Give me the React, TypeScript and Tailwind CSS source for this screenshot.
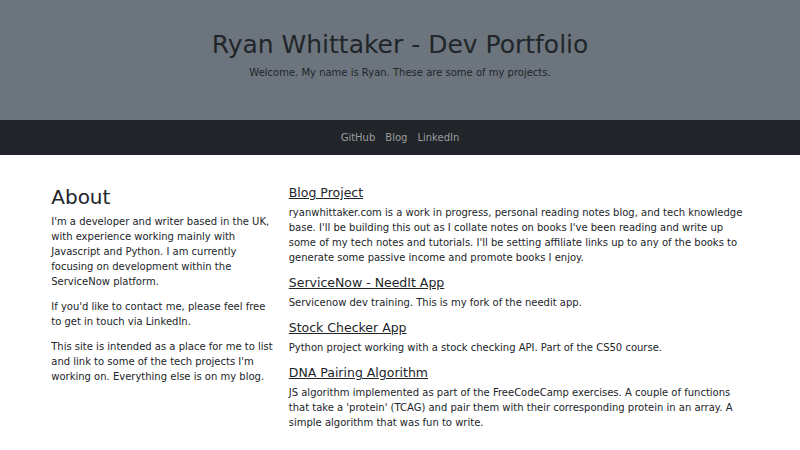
const projects = [
  {
    title: "Blog Project",
    text: "ryanwhittaker.com is a work in progress, personal reading notes blog, and tech knowledge base. I'll be building this out as I collate notes on books I've been reading and write up some of my tech notes and tutorials. I'll be setting affiliate links up to any of the books to generate some passive income and promote books I enjoy.",
  },
  {
    title: "ServiceNow - NeedIt App",
    text: "Servicenow dev training. This is my fork of the needit app.",
  },
  {
    title: "Stock Checker App",
    text: "Python project working with a stock checking API. Part of the CS50 course.",
  },
  {
    title: "DNA Pairing Algorithm",
    text: "JS algorithm implemented as part of the FreeCodeCamp exercises. A couple of functions that take a 'protein' (TCAG) and pair them with their corresponding protein in an array. A simple algorithm that was fun to write.",
  },
];

export default function App() {
  return (
    <div
      className="min-h-[450px] bg-white text-[#212529] text-[10px] leading-[15px]"
      style={{ fontFamily: '"DejaVu Sans", sans-serif' }}
    >
      {/* Header */}
      <header className="bg-[#6c757d] text-center px-[30px] pt-[30px] pb-[30px]">
        <h1 className="text-[25px] leading-[30px] font-normal mb-[5px]">
          Ryan Whittaker - Dev Portfolio
        </h1>
        <p className="mb-[10px]">Welcome. My name is Ryan. These are some of my projects.</p>
      </header>

      {/* Nav */}
      <nav className="bg-[#212529] py-[5px] flex justify-center">
        <a href="#" className="px-[5px] py-[5px] text-[#9b9d9f]">GitHub</a>
        <a href="#" className="px-[5px] py-[5px] text-[#9b9d9f]">Blog</a>
        <a href="#" className="px-[5px] py-[5px] text-[#9b9d9f]">LinkedIn</a>
      </nav>

      {/* Main */}
      <main className="mx-auto w-[712.5px] mt-[30px] flex">
        <div className="w-1/3 px-[7.5px]">
          <h2 className="text-[20px] leading-[24px] font-normal mb-[5px]">About</h2>
          <p className="mb-[10px]">
            I'm a developer and writer based in the UK, with experience working mainly with
            Javascript and Python. I am currently focusing on development within the ServiceNow
            platform.
          </p>
          <p className="mb-[10px]">
            If you'd like to contact me, please feel free to get in touch via LinkedIn.
          </p>
          <p className="mb-[10px]">
            This site is intended as a place for me to list and link to some of the tech projects
            I'm working on. Everything else is on my blog.
          </p>
        </div>
        <div className="w-2/3 px-[7.5px]">
          {projects.map((p) => (
            <div key={p.title}>
              <h5 className="text-[12.5px] leading-[15px] font-normal mb-[5px]">
                <a href="#" className="underline text-[#212529]">{p.title}</a>
              </h5>
              <p className="mb-[10px]">{p.text}</p>
            </div>
          ))}
        </div>
      </main>
    </div>
  );
}
